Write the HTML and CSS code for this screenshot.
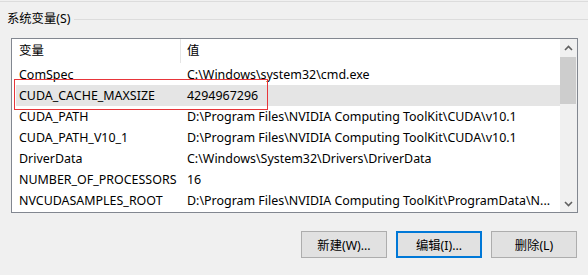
FILE: index.html
```html
<!DOCTYPE html>
<html lang="zh-CN">
<head>
<meta charset="utf-8">
<title>系统变量</title>
<link rel="stylesheet" href="styles.css">
</head>
<body>
<div class="page">
  <div class="topline"></div>
  <div class="legend">
    <span class="legend-label">系统变量(S)</span>
    <span class="legend-rule"></span>
  </div>
  <div class="listbox">
    <div class="list">
      <div class="header">
        <div class="hcell">变量</div>
        <div class="hsep"></div>
        <div class="hcell hval">值</div>
      </div>
      <div class="row"><div class="cell">ComSpec</div><div class="cell">C:\Windows\system32\cmd.exe</div></div>
      <div class="row selected"><div class="cell">CUDA_CACHE_MAXSIZE</div><div class="cell">4294967296</div></div>
      <div class="row"><div class="cell">CUDA_PATH</div><div class="cell">D:\Program Files\NVIDIA Computing ToolKit\CUDA\v10.1</div></div>
      <div class="row"><div class="cell">CUDA_PATH_V10_1</div><div class="cell">D:\Program Files\NVIDIA Computing ToolKit\CUDA\v10.1</div></div>
      <div class="row"><div class="cell">DriverData</div><div class="cell">C:\Windows\System32\Drivers\DriverData</div></div>
      <div class="row"><div class="cell">NUMBER_OF_PROCESSORS</div><div class="cell">16</div></div>
      <div class="row"><div class="cell">NVCUDASAMPLES_ROOT</div><div class="cell">D:\Program Files\NVIDIA Computing ToolKit\ProgramData\N...</div></div>
    </div>
    <div class="scrollbar">
      <div class="sb-btn">
        <svg width="9" height="6" viewBox="0 0 9 6"><path d="M1 5 L4.5 1.5 L8 5" fill="none" stroke="#606060" stroke-width="1.6"/></svg>
      </div>
      <div class="sb-track"><div class="sb-thumb"></div></div>
      <div class="sb-btn">
        <svg width="9" height="6" viewBox="0 0 9 6"><path d="M1 1 L4.5 4.5 L8 1" fill="none" stroke="#606060" stroke-width="1.6"/></svg>
      </div>
    </div>
    <div class="annot"></div>
  </div>
  <div class="buttons">
    <button class="btn">新建(W)...</button>
    <button class="btn focus">编辑(I)...</button>
    <button class="btn">删除(L)</button>
  </div>
</div>
</body>
</html>
```
FILE: styles.css
```css
html, body {
  margin: 0;
  padding: 0;
  background: #f0f0f0;
}
body {
  font-family: "Noto Sans", "Noto Sans CJK SC", sans-serif;
  font-size: 12px;
  color: #000;
  width: 588px;
  height: 275px;
  overflow: hidden;
}
.page {
  display: flex;
  flex-direction: column;
}
.topline {
  margin-top: 1px;
  border-top: 1px solid #dcdcdc;
}
.legend {
  display: flex;
  align-items: center;
  margin-top: 9px;
  height: 16px;
  padding-left: 7px;
}
.legend-label {
  line-height: 16px;
  white-space: nowrap;
  font-size: 12.3px;
}
.legend-rule {
  flex: 1;
  border-top: 1px solid #dcdcdc;
  margin-left: 4px;
}
.listbox {
  position: relative;
  margin: 11px 10px 0 11px;
  height: 173px;
  border: 1px solid #828790;
  background: #fff;
  display: flex;
}
.list {
  flex: 1;
  display: flex;
  flex-direction: column;
  overflow: hidden;
  font-size: 12.45px;
}
.header {
  display: grid;
  grid-template-columns: 164px 1px 1fr;
  height: 25px;
  margin-left: 4px;
}
.hcell {
  padding-left: 3px;
  line-height: 24px;
}
.hval {
  padding-left: 6px;
}
.hsep {
  background: #e5e5e5;
  height: 24px;
}
.row {
  display: grid;
  grid-template-columns: 168px 1fr;
  height: 21px;
  margin-left: 4px;
  line-height: 21px;
  white-space: nowrap;
}
.row.selected {
  background: #e5e5e5;
}
.cell {
  padding-left: 3px;
  overflow: hidden;
}
.scrollbar {
  width: 17px;
  background: #f0f0f0;
  display: flex;
  flex-direction: column;
}
.sb-btn {
  height: 17px;
  display: flex;
  align-items: center;
  justify-content: center;
}
.sb-track {
  flex: 1;
  display: flex;
  flex-direction: column;
}
.sb-thumb {
  height: 47px;
  margin: 1px 1px 0 0;
  background: #cdcdcd;
}
.annot {
  position: absolute;
  left: 2px;
  top: 40px;
  width: 252px;
  height: 29px;
  border: 1px solid #e8353a;
  pointer-events: none;
}
.buttons {
  display: flex;
  justify-content: flex-end;
  gap: 9px;
  margin: 18px 11px 0 0;
}
.btn {
  width: 86px;
  height: 27px;
  box-sizing: border-box;
  border: 1px solid #adadad;
  background: #e1e1e1;
  font-family: "Noto Sans", "Noto Sans CJK SC", sans-serif;
  font-size: 12.3px;
  color: #000;
  padding: 0;
  margin: 0;
}
.btn.focus {
  border: 2px solid #0078d7;
}
```
